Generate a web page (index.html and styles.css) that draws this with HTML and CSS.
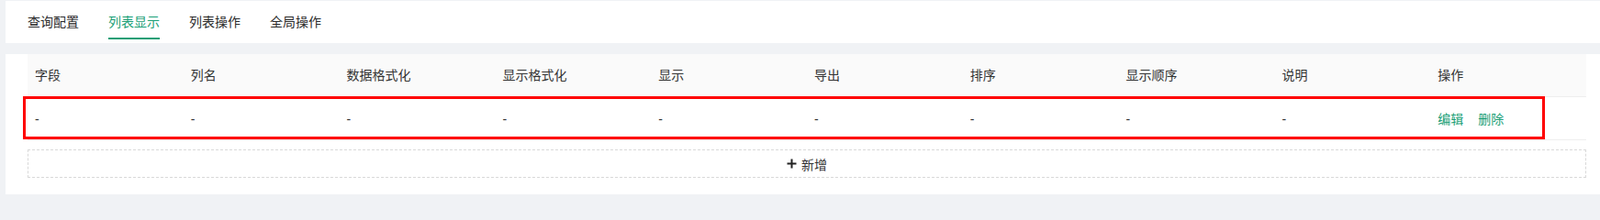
FILE: index.html
```html
<!DOCTYPE html>
<html lang="zh">
<head>
<meta charset="utf-8">
<title>列表显示</title>
<link rel="stylesheet" href="styles.css">
</head>
<body>
<div class="page">
  <div class="tabs">
    <div class="tab">查询配置</div>
    <div class="tab active">列表显示</div>
    <div class="tab">列表操作</div>
    <div class="tab">全局操作</div>
  </div>
  <div class="panel">
    <div class="table">
      <div class="row head">
        <div class="cell">字段</div>
        <div class="cell">列名</div>
        <div class="cell">数据格式化</div>
        <div class="cell">显示格式化</div>
        <div class="cell">显示</div>
        <div class="cell">导出</div>
        <div class="cell">排序</div>
        <div class="cell">显示顺序</div>
        <div class="cell">说明</div>
        <div class="cell">操作</div>
      </div>
      <div class="row body">
        <div class="cell">-</div>
        <div class="cell">-</div>
        <div class="cell">-</div>
        <div class="cell">-</div>
        <div class="cell">-</div>
        <div class="cell">-</div>
        <div class="cell">-</div>
        <div class="cell">-</div>
        <div class="cell">-</div>
        <div class="cell actions"><a class="link">编辑</a><a class="link">删除</a></div>
      </div>
    </div>
    <div class="add">
      <svg class="plus" width="11" height="11" viewBox="0 0 11 11"><path d="M5.5 0.5v10M0.5 5.5h10" stroke="#222" stroke-width="2" fill="none"/></svg>
      <span>新增</span>
    </div>
  </div>
  <div class="highlight"></div>
</div>
</body>
</html>
```
FILE: styles.css
```css
* { box-sizing: border-box; }
html, body { margin: 0; padding: 0; }
html { background: #f0f2f5; }
body {
  background: #f0f2f5;
  font-family: "Liberation Sans", "Noto Sans CJK SC", sans-serif;
  font-size: 14px;
  color: #333;
  width: 1743px;
  height: 212px;
  overflow: hidden;
}
.page {
  position: relative;
  padding: 1px 0 0 6px;
  height: 212px;
  overflow: hidden;
}
.tabs {
  background: #fff;
  height: 46px;
  display: flex;
  gap: 32px;
  padding-left: 24px;
}
.tab {
  padding: 12px 0 6px;
  line-height: 22px;
  height: 42px;
  border-bottom: 2px solid transparent;
  color: #2b2b2b;
}
.tab.active {
  color: #1a9e75;
  border-bottom-color: #1a9e75;
}
.panel {
  margin-top: 12px;
  background: #fff;
  height: 400px;
  padding: 0 15px 0 24px;
}
.table { width: 100%; }
.row {
  display: grid;
  grid-template-columns: repeat(10, 1fr);
  height: 47px;
  border-bottom: 1px solid #eeeeee;
  align-items: center;
}
.row.head { background: #fafafa; }
.cell {
  padding-left: 8px;
  line-height: 22px;
  color: #333;
}
.row.body .cell { padding-top: 1px; }
.actions { display: flex; gap: 16px; }
.link { color: #1a9e75; cursor: pointer; }
.add {
  margin-top: 10px;
  height: 31px;
  border: 1px dashed #d9d9d9;
  display: flex;
  align-items: center;
  justify-content: center;
  gap: 5px;
  color: #333;
}
.plus { display: block; }
.highlight {
  position: absolute;
  left: 25px;
  top: 105px;
  width: 1658px;
  height: 47px;
  border: 3px solid #ff0000;
  pointer-events: none;
}
```
